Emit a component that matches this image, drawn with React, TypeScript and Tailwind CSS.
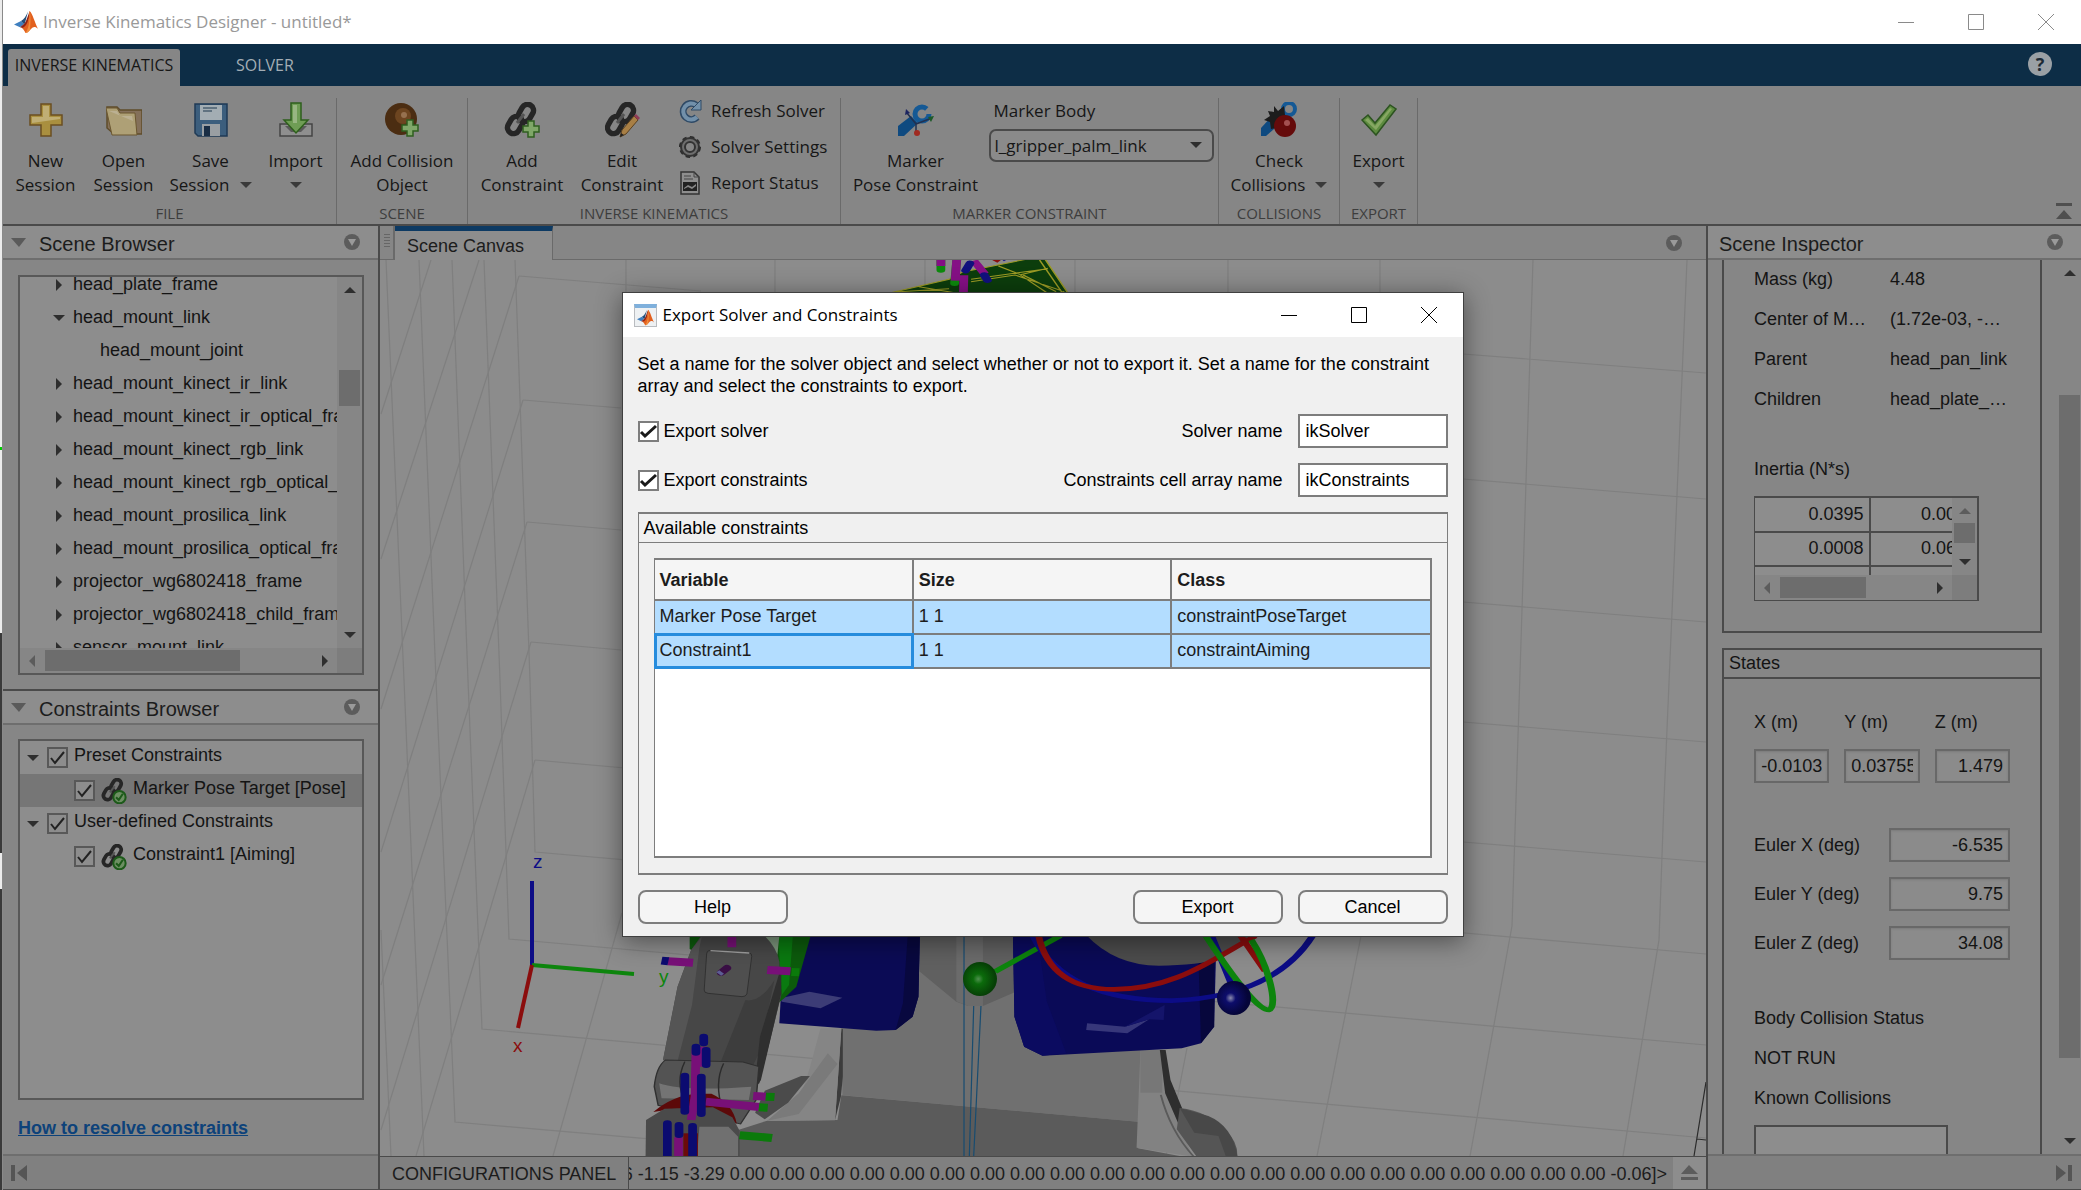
import { useState } from 'react';
import type { ReactNode } from 'react';

const sans = "font-['Liberation_Sans',Arial,sans-serif]";
const ui = "font-['Open_Sans','Noto_Sans',sans-serif]";

interface TreeNode {
  name: string;
  state: 'closed' | 'open' | 'leaf';
}

const bodies: TreeNode[] = [
  { name: 'head_plate_frame', state: 'closed' },
  { name: 'head_mount_link', state: 'open' },
  { name: 'head_mount_joint', state: 'leaf' },
  { name: 'head_mount_kinect_ir_link', state: 'closed' },
  { name: 'head_mount_kinect_ir_optical_frame', state: 'closed' },
  { name: 'head_mount_kinect_rgb_link', state: 'closed' },
  { name: 'head_mount_kinect_rgb_optical_frame', state: 'closed' },
  { name: 'head_mount_prosilica_link', state: 'closed' },
  { name: 'head_mount_prosilica_optical_frame', state: 'closed' },
  { name: 'projector_wg6802418_frame', state: 'closed' },
  { name: 'projector_wg6802418_child_frame', state: 'closed' },
  { name: 'sensor_mount_link', state: 'closed' }
];

const bodyInfo = [
  ['Mass (kg)', '4.48'],
  ['Center of M…', '(1.72e-03, -…'],
  ['Parent', 'head_pan_link'],
  ['Children', 'head_plate_…']
];

const constraintRows = [
  ['Marker Pose Target', '1 1', 'constraintPoseTarget'],
  ['Constraint1', '1 1', 'constraintAiming']
];

const configuration = `6 -1.15 -3.29 ${'0.00 '.repeat(22)}-0.06]>`;

/* ---------- small glyphs ---------- */

function Arrow({ dir, className }: { dir: 'up' | 'down' | 'left' | 'right'; className?: string }) {
  const shapes = {
    up: '0,6 6,0 12,6',
    down: '0,0 12,0 6,6',
    left: '6,0 6,12 0,6',
    right: '0,0 6,6 0,12'
  };
  const tall = dir === 'left' || dir === 'right';
  return (
    <svg
      width={tall ? 6 : 12}
      height={tall ? 12 : 6}
      className={`shrink-0 ${className ?? 'text-[#2e2e2e]'}`}
      fill="currentColor"
    >
      <polygon points={shapes[dir]} />
    </svg>
  );
}

function MenuDot() {
  return (
    <svg width="16" height="16" viewBox="0 0 16 16" className="shrink-0">
      <circle cx="8" cy="8" r="8" fill="#5c5c5c" />
      <path d="M4 5h8l-4 7z" fill="#9a9a9a" />
    </svg>
  );
}

function MatlabLogo({ size }: { size: number }) {
  return (
    <svg width={size} height={size} viewBox="0 0 24 24">
      <path d="M0 14.500 7 11l3 3.200-4 3z" fill="#3f7fbf" />
      <path d="M7 11c3-1.500 5-5 7-9.500L11 13l-1 1.200z" fill="#244f7a" />
      <path d="M6 17.200 10 14c3-3 4-10 6-13-1 9-2 14-4.500 18z" fill="#8f2417" />
      <path d="M15.500 1c3 2 5 11 8.500 18-3-3-5-2-7 0-2 2-3 4-5.500 4-1-2-2-4-3.500-5 5-1 7-9 7.500-17z" fill="#e2601e" />
      <path d="M15.500 1c1.500 4 1 12 .5 19-1.500 2-2.500 3-4.500 3 3-4 4.500-12 4-22z" fill="#f5a04a" opacity=".7" />
    </svg>
  );
}

function ChainLinks() {
  return (
    <g fill="none" stroke="#262626" strokeWidth="5.500">
      <rect x="-6" y="-9" width="12" height="18" rx="6" transform="translate(22 11) rotate(30)" />
      <rect x="-6" y="-9" width="12" height="18" rx="6" transform="translate(11 23) rotate(30)" />
      <path d="m13 21 7-9" stroke="#555" strokeWidth="3" />
    </g>
  );
}

function GreenPlus({ x, y }: { x: number; y: number }) {
  return (
    <path
      transform={`translate(${x} ${y})`}
      d="M5 0h6v5h5v6h-5v5H5v-5H0V5h5z"
      fill="#7fa768"
      stroke="#2f5f1f"
      strokeWidth="1.500"
    />
  );
}

function Icon({ children }: { children: ReactNode }) {
  return (
    <svg width="36" height="36" viewBox="0 0 36 36">
      {children}
    </svg>
  );
}

const icons = {
  newSession: (
    <Icon>
      <path d="M13 2h10v11h11v10H23v11H13V23H2V13h11z" fill="#a98f3f" stroke="#6b4f22" strokeWidth="1.500" />
      <path d="M15 4h6v11h11v2L4 21v-6h11z" fill="#c0ae74" />
    </Icon>
  ),
  open: (
    <Icon>
      <path d="M1 5h10l3 3h22v24H8L1 26z" fill="#84705a" stroke="#5f4c2a" strokeWidth="1.500" />
      <path d="M0 6h11l3 5h15l2 22H6z" fill="#aea076" stroke="#6b5730" />
      <path d="M3 9h8l3 5h12l1 5z" fill="#bbb092" />
    </Icon>
  ),
  save: (
    <Icon>
      <path d="M2 2h32v32H5l-3-3z" fill="#3c5e7d" stroke="#1f3a55" strokeWidth="1.500" />
      <path d="M7 3h22v15H7z" fill="#a3adb3" />
      <path d="M10 6h14M10 9h9" stroke="#4b5f70" strokeWidth="1.500" />
      <path d="M9 22h18v12H9z" fill="#9a9fa3" />
      <path d="M11 24h6v10h-6z" fill="#1a2e45" />
    </Icon>
  ),
  import: (
    <Icon>
      <path d="M2 22h32v12H2z" fill="#8f8f8f" stroke="#454545" strokeWidth="1.500" />
      <path d="M7 24h22l-6 6H13z" fill="#5a5a5a" />
      <path d="M13 1h10v17h7L18 31 6 18h7z" fill="#6f9d55" stroke="#2e5f1c" strokeWidth="1.500" />
      <path d="M15 3h4v18h-4z" fill="#98b682" />
    </Icon>
  ),
  collisionObject: (
    <Icon>
      <circle cx="17" cy="17" r="16" fill="#4b2d12" />
      <circle cx="19" cy="14" r="8" fill="#6d4520" />
      <circle cx="20" cy="13" r="3" fill="#96714f" />
      <GreenPlus x={18} y={18} />
    </Icon>
  ),
  addConstraint: (
    <Icon>
      <ChainLinks />
      <GreenPlus x={19} y={19} />
    </Icon>
  ),
  editConstraint: (
    <Icon>
      <ChainLinks />
      <path d="m16 35 2-7 12-14 4 4-12 14z" fill="#a87f45" stroke="#5a4020" />
      <path d="m30 14 2-2 4 4-2 2z" fill="#8e3a55" />
      <path d="m16 35 1-4 3 2z" fill="#222" />
    </Icon>
  ),
  markerPose: (
    <Icon>
      <path d="M0 24 13 14l7 7L6 34H0z" fill="#0f4a80" />
      <circle cx="24" cy="12" r="7" fill="none" stroke="#155995" strokeWidth="5" strokeDasharray="38 6" />
      <path d="m18 22-9-11m9 11 16-6m-16 6v9" stroke="#22304f" strokeWidth="1.500" />
      <path d="m30 15 6-1-3 6z" fill="#1d5a28" />
      <path d="m7 13 1-6 4 4z" fill="#1c2460" />
      <circle cx="19" cy="31" r="3" fill="#a02a20" />
    </Icon>
  ),
  checkCollisions: (
    <Icon>
      <path d="M0 26 12 13l8 8L5 34H0z" fill="#0f4a80" />
      <circle cx="28" cy="7" r="6" fill="none" stroke="#155995" strokeWidth="4" />
      <path d="m13 4 4 5 6-5 1 9 4 4-8 8-10 2-1-7-6-2 6-4-2-5 6 1z" fill="#1c1c1c" />
      <circle cx="24" cy="24" r="11" fill="#650b0b" />
      <circle cx="26" cy="21" r="3" fill="#a35050" />
    </Icon>
  ),
  export: (
    <Icon>
      <path d="m1 18 6-5 7 8L29 3l6 4-20 26z" fill="#5c8b3f" stroke="#2c5320" strokeWidth="1.500" />
      <path d="m4 18 3-2 7 8L29 6l2 1-16 21z" fill="#86a763" />
    </Icon>
  )
};

/* ---------- toolstrip ---------- */

interface ToolButtonProps {
  icon: ReactNode;
  lines: [string, string?];
  menu?: boolean;
  className: string;
}

function ToolButton({ icon, lines, menu, className }: ToolButtonProps) {
  return (
    <button className={`flex shrink-0 flex-col items-center whitespace-nowrap ${className}`}>
      {icon}
      <span className="mt-[11px] leading-6">{lines[0]}</span>
      <span className="flex h-6 items-center justify-center gap-[10px] leading-6">
        {lines[1]}
        {menu && <Arrow dir="down" className="text-[#3a3a3a]" />}
      </span>
    </button>
  );
}

function Section({ title, className, children }: { title: string; className: string; children: ReactNode }) {
  return (
    <section className={`flex shrink-0 flex-col border-r border-[#6a6a6a] pb-px ${className}`}>
      <div className="flex flex-1 justify-center pt-1">{children}</div>
      <h2 className="whitespace-nowrap text-center text-[15px] leading-5 text-[#3d3d3d]">{title}</h2>
    </section>
  );
}

function Toolstrip() {
  const [marker, setMarker] = useState('l_gripper_palm_link');

  return (
    <div className={`flex h-[140px] shrink-0 border-b-2 border-[#4a4a4a] bg-[#868686] pt-3 text-[17px] text-[#161616] ${ui}`}>
      <Section title="FILE" className="w-[334px]">
        <ToolButton icon={icons.newSession} lines={['New', 'Session']} className="w-[78px]" />
        <ToolButton icon={icons.open} lines={['Open', 'Session']} className="w-[78px]" />
        <ToolButton icon={icons.save} lines={['Save', 'Session']} menu className="w-[96px]" />
        <ToolButton icon={icons.import} lines={['Import']} menu className="w-[74px]" />
      </Section>
      <Section title="SCENE" className="w-[131px]">
        <ToolButton icon={icons.collisionObject} lines={['Add Collision', 'Object']} className="w-[120px]" />
      </Section>
      <Section title="INVERSE KINEMATICS" className="w-[373px]">
        <ToolButton icon={icons.addConstraint} lines={['Add', 'Constraint']} className="w-[100px]" />
        <ToolButton icon={icons.editConstraint} lines={['Edit', 'Constraint']} className="w-[100px]" />
        <div className="-mt-[9px] flex w-[164px] flex-col pl-[6px]">
          <button className="flex h-9 items-center gap-[9px] whitespace-nowrap">
            <svg width="24" height="24" viewBox="0 0 24 24" className="shrink-0" fill="none">
              <path d="M19 18a8 8 0 1 1-1-12" stroke="#2f4a66" strokeWidth="7" />
              <path d="M19 18a8 8 0 1 1-1-12" stroke="#7290aa" strokeWidth="4" />
              <path d="M23 1v10H13z" fill="#7290aa" stroke="#2f4a66" />
            </svg>
            Refresh Solver
          </button>
          <button className="flex h-9 items-center gap-[9px] whitespace-nowrap">
            <svg width="24" height="24" viewBox="0 0 24 24" className="shrink-0" fill="none">
              <circle cx="12" cy="12" r="9" stroke="#2c2c2c" strokeWidth="4" strokeDasharray="4 3" />
              <circle cx="12" cy="12" r="7" stroke="#333" strokeWidth="6" />
              <circle cx="12" cy="12" r="7" stroke="#6e6e6e" strokeWidth="2" />
            </svg>
            Solver Settings
          </button>
          <button className="flex h-9 items-center gap-[9px] whitespace-nowrap">
            <svg width="24" height="24" viewBox="0 0 24 24" className="shrink-0">
              <path d="M3 1h13l5 5v17H3z" fill="#8e8e8e" stroke="#333" strokeWidth="1.500" />
              <path d="M16 1v5h5M6 5h7M6 8h9" stroke="#444" fill="none" />
              <path d="M5 11h14v9H5z" fill="#222" />
              <path d="m6 17 4-3 4 2 4-3v2l-4 3-4-2-4 2z" fill="#888" />
            </svg>
            Report Status
          </button>
        </div>
      </Section>
      <Section title="MARKER CONSTRAINT" className="w-[378px]">
        <ToolButton icon={icons.markerPose} lines={['Marker', 'Pose Constraint']} className="w-[140px]" />
        <div className="-mt-[9px] flex w-[228px] flex-col">
          <label htmlFor="marker-body" className="pl-2 leading-9">
            Marker Body
          </label>
          <div className="relative ml-[3px]">
            <select
              id="marker-body"
              value={marker}
              onChange={(e) => setMarker(e.target.value)}
              className="h-[33px] w-full appearance-none rounded-[7px] border-2 border-[#4a4a4a] bg-[#8a8a8a] pl-1 pr-8"
            >
              <option>l_gripper_palm_link</option>
              <option>r_gripper_palm_link</option>
            </select>
            <Arrow dir="down" className="pointer-events-none absolute right-3 top-[13px] text-[#2e2e2e]" />
          </div>
        </div>
      </Section>
      <Section title="COLLISIONS" className="w-[121px]">
        <ToolButton icon={icons.checkCollisions} lines={['Check', 'Collisions']} menu className="w-[112px]" />
      </Section>
      <Section title="EXPORT" className="w-[78px]">
        <ToolButton icon={icons.export} lines={['Export']} menu className="w-[70px]" />
      </Section>
      <div className="flex flex-1 items-end justify-end pb-1 pr-2">
        <button aria-label="Minimize toolstrip">
          <svg width="18" height="17" fill="#4f4f4f">
            <path d="M1 0h16v3H1zM1 16 9 7l8 9z" />
          </svg>
        </button>
      </div>
    </div>
  );
}

/* ---------- side panels ---------- */

function PanelHeader({ title, collapsible }: { title: string; collapsible?: boolean }) {
  return (
    <div className="flex h-[34px] shrink-0 items-center border-b-2 border-[#6e6e6e] bg-[#8d8d8d] text-xl text-[#1c1c1c]">
      {collapsible && (
        <svg width="15" height="9" className="ml-2 mr-[13px]" fill="#5a5a5a">
          <path d="M0 0h15L8 9z" />
        </svg>
      )}
      <h2 className={collapsible ? 'flex-1 pt-[3px]' : 'flex-1 pl-[11px] pt-[3px]'}>{title}</h2>
      <button aria-label={`${title} actions`} className="mr-[18px]">
        <MenuDot />
      </button>
    </div>
  );
}

function SceneBrowser() {
  return (
    <section className="flex h-[465px] shrink-0 flex-col border-b-2 border-[#4a4a4a]">
      <PanelHeader title="Scene Browser" collapsible />
      <div className="mb-[14px] ml-[15px] mr-[14px] mt-[15px] grid min-h-0 flex-1 grid-cols-[1fr_25px] grid-rows-[1fr_25px] border-2 border-[#585858] bg-[#8d8d8d]">
        <div className="min-h-0 overflow-hidden">
          <ul className="-mt-[10px] whitespace-nowrap">
            {bodies.map((body) => (
              <li
                key={body.name}
                className={`flex h-[33px] items-center text-lg ${body.state === 'leaf' ? 'pl-[80px]' : 'pl-[33px]'}`}
              >
                {body.state !== 'leaf' && (
                  <span className="mr-2 flex w-3 shrink-0 justify-center pt-[3px]">
                    <Arrow dir={body.state === 'open' ? 'down' : 'right'} />
                  </span>
                )}
                {body.name}
              </li>
            ))}
          </ul>
        </div>
        <div className="flex flex-col items-center bg-[#868686] py-[10px]">
          <Arrow dir="up" />
          <div className="mt-[77px] h-9 w-[21px] bg-[#6d6d6d]" />
          <Arrow dir="down" className="mt-auto text-[#2e2e2e]" />
        </div>
        <div className="flex items-center bg-[#868686] px-[9px]">
          <Arrow dir="left" className="text-[#5c5c5c]" />
          <div className="ml-[10px] h-[21px] w-[195px] bg-[#6d6d6d]" />
          <Arrow dir="right" className="ml-auto text-[#2e2e2e]" />
        </div>
        <div className="bg-[#7d7d7d]" />
      </div>
    </section>
  );
}

function TreeCheck({ label, child, selected }: { label: string; child?: boolean; selected?: boolean }) {
  const [checked, setChecked] = useState(true);
  return (
    <li className={`flex h-[33px] items-center ${child ? 'pl-[54px]' : 'pl-[7px]'} ${selected ? 'bg-[#767676]' : ''}`}>
      {!child && <Arrow dir="down" className="mr-2 text-[#2e2e2e]" />}
      <label className="flex items-center">
        <span className="grid">
          <input
            type="checkbox"
            checked={checked}
            onChange={(e) => setChecked(e.target.checked)}
            className="peer col-start-1 row-start-1 h-[21px] w-[21px] appearance-none border-2 border-[#585858] bg-[#8d8d8d]"
          />
          <svg
            width="21"
            height="21"
            className="pointer-events-none invisible col-start-1 row-start-1 peer-checked:visible"
            fill="none"
            stroke="#222"
            strokeWidth="2"
          >
            <path d="m4 11 4 5 9-11" />
          </svg>
        </span>
        {child && (
          <svg width="26" height="26" viewBox="0 0 38 38" className="ml-[6px]">
            <ChainLinks />
            <circle cx="27" cy="28" r="9" fill="#6d8f63" stroke="#1d5a1a" strokeWidth="3" />
            <path d="m22 28 4 4 6-9" fill="none" stroke="#1d5a1a" strokeWidth="3" />
          </svg>
        )}
        <span className="pb-[6px] pl-[6px]">{label}</span>
      </label>
    </li>
  );
}

function ConstraintsBrowser() {
  return (
    <section className="flex min-h-0 flex-1 flex-col">
      <PanelHeader title="Constraints Browser" collapsible />
      <div className="flex min-h-0 flex-1 flex-col pb-3 pl-[15px] pr-[14px] pt-[14px]">
        <ul className="flex-1 whitespace-nowrap border-2 border-[#585858] bg-[#8d8d8d]">
          <TreeCheck label="Preset Constraints" />
          <TreeCheck label="Marker Pose Target [Pose]" child selected />
          <TreeCheck label="User-defined Constraints" />
          <TreeCheck label="Constraint1 [Aiming]" child />
        </ul>
        <a href="#resolve" className="mt-[14px] self-start font-bold leading-7 text-[#0d427a] underline">
          How to resolve constraints
        </a>
      </div>
      <div className="flex h-[35px] shrink-0 items-center border-t-2 border-[#6e6e6e] bg-[#808080] pl-2">
        <button aria-label="Collapse left panel">
          <svg width="17" height="16" fill="#555">
            <path d="M0 0h4v16H0zM16 0v16L6 8z" />
          </svg>
        </button>
      </div>
    </section>
  );
}

const field = 'h-[34px] border-2 border-[#686868] bg-[#8b8b8b] px-[5px] text-right shadow-[inset_0_1px_2px_#7c7c7c]';

function SceneInspector() {
  return (
    <aside className="flex w-[375px] shrink-0 flex-col border-l-2 border-[#4a4a4a] text-lg text-[#141414]">
      <PanelHeader title="Scene Inspector" />
      <div className="flex min-h-0 flex-1">
        <div className="flex min-w-0 flex-1 flex-col gap-[15px] overflow-hidden pl-[14px]">
          <div className="h-[373px] shrink-0 border-2 border-t-0 border-[#4a4a4a] px-[30px]">
            <dl className="-mt-px grid grid-cols-[112px_122px] gap-x-6 whitespace-nowrap leading-10">
              {bodyInfo.map(([name, value]) => (
                <div key={name} className="contents">
                  <dt>{name}</dt>
                  <dd>{value}</dd>
                </div>
              ))}
            </dl>
            <p className="mt-[30px] leading-10">Inertia (N*s)</p>
            <div className="mt-[7px] grid h-[105px] w-[225px] grid-cols-[1fr_25px] grid-rows-[1fr_25px] border border-r-2 border-t-2 border-[#4a4a4a] bg-[#8d8d8d]">
              <div className="min-h-0 min-w-0 overflow-hidden">
                <table className="w-[229px] table-fixed border-collapse text-right leading-[30px]">
                  <tbody>
                    {[['0.0395', '0.0008'], ['0.0008', '0.0664'], ['0.0037', '0.0036']].map((row) => (
                      <tr key={row[0] + row[1]} className="h-[34px] border-b-2 border-[#4a4a4a]">
                        <td className="border-r-2 border-[#4a4a4a] pb-[2px] pr-[5px]">{row[0]}</td>
                        <td className="pb-[2px] pr-2">{row[1]}</td>
                      </tr>
                    ))}
                  </tbody>
                </table>
              </div>
              <div className="flex flex-col items-center bg-[#868686] py-[10px]">
                <Arrow dir="up" className="text-[#5c5c5c]" />
                <div className="mt-[9px] h-5 w-[21px] shrink-0 bg-[#6d6d6d]" />
                <Arrow dir="down" className="mt-auto text-[#2e2e2e]" />
              </div>
              <div className="flex items-center bg-[#868686] px-[9px]">
                <Arrow dir="left" className="text-[#5c5c5c]" />
                <div className="ml-[10px] h-[21px] w-[86px] bg-[#6d6d6d]" />
                <Arrow dir="right" className="ml-auto text-[#2e2e2e]" />
              </div>
              <div className="bg-[#7d7d7d]" />
            </div>
          </div>
          <div className="shrink-0 border-2 border-[#4a4a4a]">
            <h3 className="border-b-2 border-[#4a4a4a] pl-[5px] leading-[27px]">States</h3>
            <div className="px-[30px] pt-[28px]">
              <div className="grid grid-cols-3 gap-[15px]">
                {[['X (m)', '-0.0103'], ['Y (m)', '0.037558'], ['Z (m)', '1.479']].map(([name, value]) => (
                  <label key={name} className="flex flex-col leading-[30px]">
                    {name}
                    <input
                      readOnly
                      value={value}
                      className={`mt-3 w-full ${field} ${name === 'Y (m)' ? 'text-left' : ''}`}
                    />
                  </label>
                ))}
              </div>
              <div className="mt-[45px] flex flex-col gap-[15px]">
                {[['Euler X (deg)', '-6.535'], ['Euler Y (deg)', '9.75'], ['Euler Z (deg)', '34.08']].map(([name, value]) => (
                  <label key={name} className="flex items-center justify-between">
                    {name}
                    <input readOnly value={value} className={`w-[121px] ${field}`} />
                  </label>
                ))}
              </div>
              <div className="mt-[38px] leading-10">
                <p>Body Collision Status</p>
                <p>NOT RUN</p>
                <label htmlFor="known-collisions">Known Collisions</label>
              </div>
              <input
                id="known-collisions"
                readOnly
                className="mt-[7px] block h-[60px] w-[194px] border-2 border-[#4a4a4a] bg-[#8d8d8d]"
              />
            </div>
          </div>
        </div>
        <div className="ml-4 flex w-[23px] shrink-0 flex-col items-center py-[10px]">
          <Arrow dir="up" />
          <div className="mb-[80px] mt-[119px] w-[21px] flex-1 bg-[#6d6d6d]" />
          <Arrow dir="down" />
        </div>
      </div>
      <div className="flex h-[35px] shrink-0 items-center justify-end border-t-2 border-[#6e6e6e] bg-[#808080] pr-2">
        <button aria-label="Collapse right panel">
          <svg width="17" height="16" fill="#555">
            <path d="M12 0h4v16h-4zM0 0v16l10-8z" />
          </svg>
        </button>
      </div>
    </aside>
  );
}

/* ---------- 3-D scene ---------- */

function Grid() {
  return (
    <g fill="none" stroke="#7f7f7f" strokeWidth="1.200">
      {/* side wall */}
      <path d="M386 260 404 680 424 1156M381 930l10 226M419 260l17 420 19 442 345 30M452 260l16 420 14 349 1224 109M484 260l16 420 9 259 1197 106M515 260l15 420 5 172 1171 102" />
      <path d="M431 260 381 414M479 260 381 559M519 276 381 709M523 400 381 852M527 522 381 985M531 642 381 1130M535 760 416 1156M622 913 553 1156" />
      {/* back wall */}
      <path d="M519 276l182 15M523 400l98 8M527 522l94 8M531 642l90 8M535 760l90 8M1463 354l243 19M1463 479l243 20M1463 602l243 20M1463 722l243 20M1463 842l243 20" />
      <path d="M626 260v32M775 260v32M925 260v32M1075 260v32M1228 260v32M1380 260v32M1533 260l-17 540-4 126-42 230M1687 260l-23 540-5 140-36 216M1361 936l-44 220M1187 1048l-21 108" />
      <path d="m1706 1082-12 74m3-17 9 1" stroke="#2b2b2b" />
    </g>
  );
}

function Head() {
  return (
    <g transform="translate(620 240) scale(.5485 .3333)">
      <path d="M490 160 600 118 625 96 740 58h35l42 102z" fill="#0c3d0c" />
      <g fill="none" stroke="#9c9a25" strokeWidth="3">
        <path d="M490 160 600 118 625 96 740 58h35l42 102M765 60l42 100M640 118l140-32M640 125l80-20 90 50M500 156l100-10M545 140l65 18M730 105l50 55M735 105l60 50M690 78l40 26M780 85 730 104" />
      </g>
      <g strokeWidth="16" strokeLinecap="round">
        <path d="M585 90V60" stroke="#0d8a0d" />
        <path d="M585 78V56" stroke="#851085" strokeLinecap="butt" />
        <path d="m610 130 4-70" stroke="#0d8a0d" />
        <path d="m611 122 3-66m13 50-1 60M645 62l20 40" stroke="#851085" strokeLinecap="butt" />
        <path d="m630 92 8-22M664 105l6 16" stroke="#10107d" />
      </g>
      <path d="M676 58h20l-8 10z" fill="#8b1010" />
      <path d="M696 58h10l-6 6z" fill="#1a1a8a" />
    </g>
  );
}

function Robot() {
  return (
    <g transform="translate(600 900) scale(.4847 .3333)">
      {/* base */}
      <path d="M498 105h667l-55 560-610-79z" fill="#707070" />
      <path d="M498 586l612 79v80l100 27H285V690l60-28 145-2z" fill="#5b5b5b" />
      <path d="M498 385l-13 275 12-70 4-60V388z" fill="#3c3c3c" />
      <path d="M455 385h43l-13 276-140 2 68-70 20-90z" fill="#858585" />
      <path d="M345 662 410 580l60-120 20 32-80 150z" fill="#7a7a7a" />
      <path d="M340 572 415 528h18l-45 80-48 50-20-20z" fill="#4b4b4b" />
      <path d="M1115 450h45l12 130 30 110 20 80-115-27z" fill="#828282" />
      <path d="M1115 450h45v128h-45z" fill="#777" />
      <path d="M1155 450h12l10 90 24 85-5 55-30-100z" fill="#2e2e2e" />
      <path d="M1196 624q60 10 95 70 25 30 24 74h-85l-40-80z" fill="#555" />
      <path d="m1196 624 30 74 50 10 15 60h24q-10-90-60-120z" fill="#484848" />
      <path d="M1157 585q20 110 68 185" stroke="#5a5a5a" strokeWidth="4" fill="none" />

      {/* torso */}
      <path d="M658 105h200v170l-68 43h-30l-25-13-75-90z" fill="#606060" />
      <path d="M735 105h55v213h-30l-25-14z" fill="#6b6b6b" />
      <path d="M751 105v663M771 318l-9 450M786 318l-15 450" stroke="#184c70" strokeWidth="2.500" />

      {/* right arm shells */}
      <path d="M420 105h240l-3 185-12 60-35 40-40 2-200-22 3-80z" fill="#0b0b55" />
      <path d="M635 105h25l-3 185-12 60-35 40 15-80z" fill="#08083f" />
      <path d="m372 295 60-20 68 18-45 32-80-20z" fill="#3c3c76" />
      <path d="M185 105h250l-30 155-25 35-10 12-185-160z" fill="#0c5b0c" />
      <path d="M368 105h30l-8 150-15 30-5-120z" fill="#0a7a10" />
      <path d="m325 105 45 4-4 55z" fill="#7c967c" />
      <path d="M210 105h128q28 40 32 80l4 100-45 265-55 40-144-110 30-220 28-110z" fill="#474747" />
      <path d="m210 110-22 40-28 110-30 220 30 4 30-170 15-170z" fill="#555" />
      <path d="M300 300q30 10 60-60l-32 220-20 60-60-30z" fill="#3d3d3d" />
      <path d="M374 200v80l-42 260-14 30 12-160z" fill="#2f2f2f" />
      <path d="m225 152 82 6q7 2 6 12l-10 112q-2 8-10 8l-70-10q-9-2-8-10l5-108q1-10 5-10z" fill="#4f4f4f" stroke="#2c2c2c" strokeWidth="2" />
      <path d="m228 152 80 7" stroke="#a0a0a0" strokeWidth="4" />
      <path d="m135 480 160 6 33 14-6 100-32 72-170-56-8-56q4-60 23-80z" fill="#535353" stroke="#303030" strokeWidth="3" />
      <path d="M122 550q50 25 190 10l-5 40-180-5z" fill="#747474" />
      <path d="M175 485q-20 60 0 120M255 490q-20 60-2 140" stroke="#2b2b2b" strokeWidth="3" fill="none" />
      <path d="M110 636q40-50 90-55h30q45 30 52 90l-50-45h-80z" fill="#5c0909" />
      <path d="m95 660 38-34 100-4 40 30 15 40v80H94z" fill="#4a4a4a" />
      <path d="M205 680h60l20 30v60h-85z" fill="#707070" />
      <path d="M172 700h30v70h-30z" fill="#6b0a0a" />

      {/* joint frames */}
      <g strokeWidth="24" stroke="#781078">
        <path d="M218 605l110 16M316 588l26 2M140 184l52 4M345 210l48 4" />
      </g>
      <g strokeWidth="18" stroke="#781078">
        <path d="M198 445 196 590 188 660M272 108v34M162 712v60M212 440v60" />
      </g>
      <g strokeWidth="18" strokeLinecap="round" stroke="#0b0b70">
        <path d="M214 410v20M219 450v45M198 440v18M175 527v108M209 530v112M139 670v100M163 675v30M191 678v92" />
      </g>
      <path d="m127 182 14 2" strokeWidth="24" stroke="#0b0b70" />
      <g strokeWidth="24" stroke="#0b7a0b">
        <path d="m395 216 16 1M342 590l18 1M328 622l18 1M288 706l67 8" />
      </g>
      <path d="m250 218 12-14" strokeWidth="18" stroke="#3a0f45" strokeLinecap="round" />
      <path d="m245 222 6-6" strokeWidth="14" stroke="#5d5d94" />

      {/* left arm shell */}
      <path d="M852 105h420l-5 275-27 50-40 15-287 22-38-27-20-90z" fill="#0a0a57" />
      <path d="M852 105h50l20 200 40 155-49 7-38-27-20-90z" fill="#0b0b60" />
      <path d="m1235 190 33-10-1 200-27 50z" fill="#07073c" />
      <path d="m1005 370 78 10 50-22-45 42-85-10z" fill="#37377a" />
      <path d="m1083 380 82-65-2 45-30-2z" fill="#14146a" />
      <path d="M1003 105q60 92 150 92 80 0 130-22l60-70z" fill="#4c4c4c" />

      {/* marker gizmo */}
      <g fill="none" strokeWidth="14">
        <path d="m815 215 135-108" stroke="#0d850d" />
        <path d="M893 108Q960 302 1180 302 1390 290 1470 108M1262 108l42 150" stroke="#0c0c86" />
        <path d="M905 108Q930 268 1060 268C1180 268 1250 190 1352 108M1322 108l50 105" stroke="#8b0d0d" />
        <path d="M1250 108Q1350 330 1380 330C1400 320 1380 200 1344 120" stroke="#0d850d" />
      </g>
    </g>
  );
}

function SceneCanvas() {
  return (
    <main className="flex min-w-0 flex-1 flex-col">
      <div className="flex h-[34px] shrink-0 bg-[#868686] text-lg text-[#1c1c1c]">
        <div className="flex w-[15px] flex-col gap-[2px] border-b border-r-2 border-[#6a6a6a] pl-1 pt-2">
          {[0, 1, 2, 3, 4].map((i) => (
            <span key={i} className="h-px w-[6px] bg-[#666666]" />
          ))}
        </div>
        <button className="w-[158px] border-r border-t-[5px] border-r-[#6a6a6a] border-t-[#0d3a63] bg-[#8d8d8d] pl-3 text-left">
          Scene Canvas
        </button>
        <div className="flex flex-1 items-center justify-end border-b border-[#6a6a6a] pr-6">
          <button aria-label="Scene Canvas actions">
            <MenuDot />
          </button>
        </div>
      </div>
      <div className="min-h-0 flex-1 overflow-hidden bg-[#8c8c8c]">
        <svg viewBox="380 260 1326 896" preserveAspectRatio="xMidYMid slice" className="block h-full w-full">
          <defs>
            <radialGradient id="greenBall" cx=".45" cy=".5">
              <stop offset="0" stopColor="#4f914f" />
              <stop offset=".3" stopColor="#0b6b0b" />
              <stop offset="1" stopColor="#063f06" />
            </radialGradient>
            <radialGradient id="blueBall" cx=".4" cy=".5">
              <stop offset="0" stopColor="#8c8cae" />
              <stop offset=".3" stopColor="#0d0d6b" />
              <stop offset="1" stopColor="#050538" />
            </radialGradient>
          </defs>
          <Grid />
          <Head />
          <Robot />
          <circle cx="980" cy="979" r="17" fill="url(#greenBall)" />
          <circle cx="1234" cy="998" r="17" fill="url(#blueBall)" />
          <g fill="none" strokeWidth="4">
            <path d="M532 965V881" stroke="#0d0d86" />
            <path d="m532 965 102 9" stroke="#0d850d" />
            <path d="m532 965-14 63" stroke="#8b0d0d" />
          </g>
          <g fontSize="19" className={sans}>
            <text x="533" y="868" fill="#0d0d86">z</text>
            <text x="659" y="983" fill="#0d850d">y</text>
            <text x="513" y="1052" fill="#8b0d0d">x</text>
          </g>
        </svg>
      </div>
      <div className="flex h-[33px] shrink-0 border-t border-[#4a4a4a] bg-[#808080] text-lg leading-[34px] text-[#1c1c1c]">
        <span className="w-[249px] shrink-0 border-r border-[#4a4a4a] pl-3">CONFIGURATIONS PANEL</span>
        <div className="flex min-w-0 flex-1 justify-end overflow-hidden whitespace-nowrap pr-[6px]">
          <span className="shrink-0">{configuration}</span>
        </div>
        <button aria-label="Expand configurations panel" className="flex w-[33px] items-center justify-center bg-[#8d8d8d]">
          <svg width="17" height="16" fill="#5c5c5c">
            <path d="M0 9 8 0l9 9zM0 12h17v3H0z" />
          </svg>
        </button>
      </div>
    </main>
  );
}

/* ---------- export dialog ---------- */

function WindowButtons({ className }: { className: string }) {
  return (
    <div className={`flex items-center gap-[54px] ${className}`}>
      <button aria-label="Minimize">
        <svg width="16" height="16" stroke="currentColor">
          <path d="M0 8.500h16" />
        </svg>
      </button>
      <button aria-label="Maximize">
        <svg width="16" height="16" stroke="currentColor" fill="none">
          <path d="M.5.5h15v15H.5z" />
        </svg>
      </button>
      <button aria-label="Close">
        <svg width="16" height="16" stroke="currentColor">
          <path d="m0 0 16 16M16 0 0 16" />
        </svg>
      </button>
    </div>
  );
}

interface ExportRowProps {
  id: string;
  check: string;
  nameLabel: string;
  initial: string;
}

function ExportRow({ id, check, nameLabel, initial }: ExportRowProps) {
  const [enabled, setEnabled] = useState(true);
  const [name, setName] = useState(initial);

  return (
    <div className="flex items-center">
      <label className="flex items-center gap-[5px]">
        <span className="grid">
          <input
            type="checkbox"
            checked={enabled}
            onChange={(e) => setEnabled(e.target.checked)}
            className="peer col-start-1 row-start-1 h-[21px] w-[21px] appearance-none border-2 border-[#7d7d7d] bg-white"
          />
          <svg
            width="21"
            height="21"
            className="pointer-events-none invisible col-start-1 row-start-1 peer-checked:visible"
            fill="none"
            stroke="#1a1a1a"
            strokeWidth="3"
          >
            <path d="m3 11 4 4L18 5" />
          </svg>
        </span>
        {check}
      </label>
      <label htmlFor={id} className="ml-auto mr-[15px]">
        {nameLabel}
      </label>
      <input
        id={id}
        value={name}
        onChange={(e) => setName(e.target.value)}
        className="h-[34px] w-[150px] border-2 border-[#7d7d7d] bg-white px-[6px]"
      />
    </div>
  );
}

const dialogButton = 'h-[34px] w-[150px] rounded-lg border-2 border-[#7d7d7d] bg-[#f5f5f5]';

function ExportDialog() {
  return (
    <div
      role="dialog"
      aria-labelledby="dialog-title"
      className="w-[842px] border border-[#404040] bg-[#f0f0f0] text-lg text-black shadow-[0_4px_24px_rgba(0,0,0,0.45)]"
    >
      <div className="flex h-11 items-center bg-white pl-[11px] pr-[26px]">
        <span className="flex h-[23px] w-[23px] items-end justify-center border border-t-4 border-[#b9bcc0] border-t-[#7fb0dc] bg-[#eef1f3]">
          <MatlabLogo size={17} />
        </span>
        <h1 id="dialog-title" className={`flex-1 pl-[6px] text-[17px] ${ui}`}>
          Export Solver and Constraints
        </h1>
        <WindowButtons className="text-black" />
      </div>
      <div className="px-[15px] pb-3 pt-4">
        <p className="leading-[22px]">
          Set a name for the solver object and select whether or not to export it. Set a name for the constraint array
          and select the constraints to export.
        </p>
        <div className="mt-[17px] flex flex-col gap-[15px]">
          <ExportRow id="solver-name" check="Export solver" nameLabel="Solver name" initial="ikSolver" />
          <ExportRow
            id="constraints-name"
            check="Export constraints"
            nameLabel="Constraints cell array name"
            initial="ikConstraints"
          />
        </div>
        <div className="mt-[15px] border border-b-2 border-t-2 border-[#7d7d7d]">
          <h2 className="border-b border-[#7d7d7d] pl-[5px] leading-7">Available constraints</h2>
          <div className="mx-[15px] mb-[15px] mt-[15px] h-[300px] border-2 border-l border-[#7d7d7d] bg-white">
            <table className="w-full table-fixed border-collapse text-left">
              <thead>
                <tr className="h-10 border-b-2 border-[#7d7d7d] bg-[#f5f5f5] text-[#1c1c1c]">
                  {['Variable', 'Size', 'Class'].map((title) => (
                    <th key={title} className="border-r-2 border-[#7d7d7d] pl-[5px] font-bold last:border-r-0">
                      {title}
                    </th>
                  ))}
                </tr>
              </thead>
              <tbody>
                {constraintRows.map((row, i) => (
                  <tr key={row[0]} className="h-[34px] border-b-2 border-[#7d7d7d] bg-[#b3ddff] text-[#1c1c1c]">
                    {row.map((cell, j) => (
                      <td
                        key={j}
                        className={`border-r-2 border-[#7d7d7d] pb-[2px] pl-[5px] last:border-r-0 ${
                          i === 1 && j === 0 ? 'outline-[3px] -outline-offset-2 outline-[#268cdd]' : ''
                        }`}
                      >
                        {cell}
                      </td>
                    ))}
                  </tr>
                ))}
              </tbody>
            </table>
          </div>
        </div>
        <div className="mt-[15px] flex gap-[15px]">
          <button className={`mr-auto ${dialogButton}`}>Help</button>
          <button className={dialogButton}>Export</button>
          <button className={dialogButton}>Cancel</button>
        </div>
      </div>
    </div>
  );
}

export default function App() {
  return (
    <div className={`relative flex h-screen overflow-hidden bg-[#868686] ${sans}`}>
      {/* sliver of the window behind */}
      <div className="flex w-[3px] shrink-0 flex-col border-r border-[#8a8a8a] bg-[#3a3a3a]">
        <div className="h-[447px] bg-[#ececec]" />
        <div className="h-[3px] bg-[#0c0]" />
        <div className="h-[183px] bg-[#ececec]" />
        <div className="mt-[220px] h-9 bg-[#ececec]" />
      </div>

      <div className="flex min-w-0 flex-1 flex-col border-b border-[#4a4a4a]">
        <header className="flex h-11 shrink-0 items-center bg-white pl-[11px] pr-[27px] text-[#999999]">
          <MatlabLogo size={24} />
          <h1 className={`flex-1 pl-[5px] text-[17px] ${ui}`}>Inverse Kinematics Designer - untitled*</h1>
          <WindowButtons className="text-[#8a8a8a]" />
        </header>

        <nav className={`flex h-[42px] shrink-0 items-end bg-[#0d2d46] pl-[5px] text-[16px] ${ui}`}>
          <button className="h-[37px] w-[172px] whitespace-nowrap rounded-t-[3px] bg-[#868686] pb-[6px] text-[#161616]">
            INVERSE KINEMATICS
          </button>
          <button className="ml-[56px] h-[37px] pb-[6px] text-[#a3adb5]">SOLVER</button>
          <button
            aria-label="Help"
            className="mb-[10px] ml-auto mr-[29px] flex h-6 w-6 items-center justify-center rounded-full bg-[#9aa0a5] text-lg font-bold text-[#1d2a35]"
          >
            ?
          </button>
        </nav>

        <Toolstrip />

        <div className="flex min-h-0 flex-1">
          <aside className="flex w-[377px] shrink-0 flex-col border-r-2 border-[#4a4a4a] text-lg text-[#141414]">
            <SceneBrowser />
            <ConstraintsBrowser />
          </aside>
          <SceneCanvas />
          <SceneInspector />
        </div>
      </div>

      <div className="absolute inset-0 flex items-center justify-center pl-1 pt-[39px]">
        <ExportDialog />
      </div>
    </div>
  );
}
